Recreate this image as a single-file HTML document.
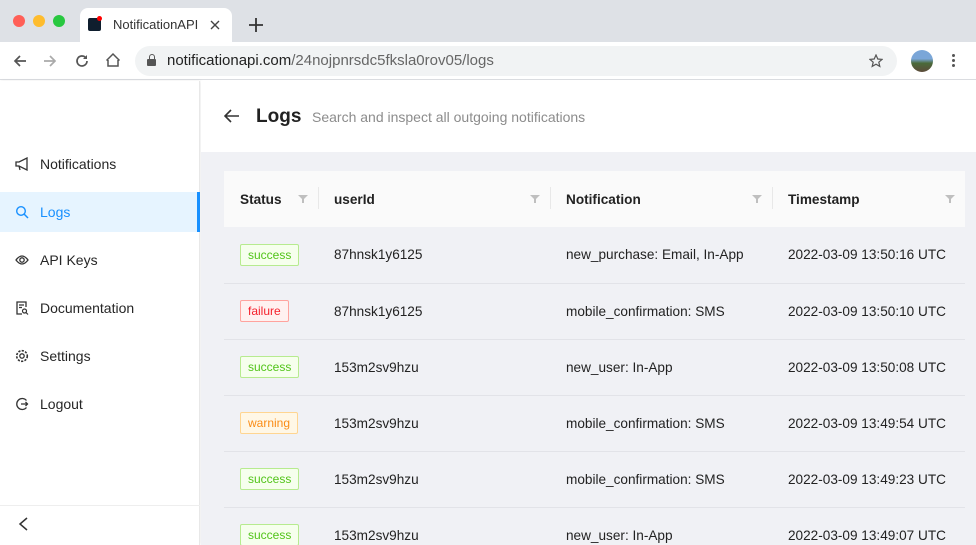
<!DOCTYPE html>
<html style="overflow:hidden"><head><style>
*{box-sizing:border-box;margin:0;padding:0}
html,body{width:976px;height:545px;overflow:hidden}
body{font-family:"Liberation Sans",Arial,sans-serif;background:#fff;position:relative;color:#222}
.tabbar{position:absolute;left:0;top:0;width:976px;height:42px;background:#dee1e6}
.dot{position:absolute;top:15px;width:12px;height:12px;border-radius:50%}
.tab{position:absolute;left:80px;top:8px;width:152px;height:34px;background:#fff;border-radius:8px 8px 0 0}
.addr{position:absolute;left:0;top:42px;width:976px;height:38px;background:#fff;border-bottom:1px solid #dadce0}
.url{position:absolute;left:135px;top:4px;width:762px;height:30px;background:#f1f3f4;border-radius:15px}
.side{position:absolute;left:0;top:81px;width:200px;height:464px;background:#fff;border-right:1px solid #e8e8e8;box-shadow:1px 0 3px rgba(0,0,0,.08)}
.item{position:absolute;left:0;width:200px;height:40px;font-size:14px;color:#262626;line-height:40px;padding-left:40px}
.item svg{position:absolute;left:15px;top:13px}
.main{position:absolute;left:201px;top:81px;width:775px;height:464px;background:#f0f1f5;overflow:hidden}
.head{position:absolute;left:0;top:0;width:775px;height:71px;background:#fff}
table{position:absolute;left:23px;top:90px;width:741px;border-collapse:collapse;font-size:13.6px}
th{background:#fafafa;height:56px;text-align:left;font-weight:bold;font-size:13.6px;color:#222;padding-left:16px;position:relative}
td{height:56px;padding-left:16px;border-bottom:1px solid #e2e3e8;color:#222}
th .f{position:absolute;right:10px;top:24px;width:0;height:0;border-left:5px solid transparent;border-right:5px solid transparent;border-top:5px solid #bfbfbf}
th .f:after{content:"";position:absolute;left:-1px;top:-2px;width:2px;height:5px;background:#bfbfbf}
th .sep{position:absolute;left:0;top:16px;height:22px;width:1px;background:#e8e8e8}
.b{display:inline-block;font-size:12px;line-height:20px;padding:0 7px;border:1px solid;border-radius:2px}
.s{color:#52c41a;background:#f6ffed;border-color:#b7eb8f}
.fl{color:#f5222d;background:#fff1f0;border-color:#ffa39e}
.w{color:#fa8c16;background:#fff7e6;border-color:#ffd591}
</style></head><body>
<div class="tabbar">
<div class="dot" style="left:13px;background:#ff5f57"></div>
<div class="dot" style="left:33px;background:#febc2e"></div>
<div class="dot" style="left:53px;background:#28c840"></div>
<div class="tab">
<div style="position:absolute;left:8px;top:10px;width:13px;height:13px;background:#0f1e2e;border-radius:2px"></div>
<div style="position:absolute;left:17px;top:8px;width:5px;height:5px;background:#f00;border-radius:50%"></div>
<div style="position:absolute;left:33px;top:9px;font-size:13px;color:#333">NotificationAPI</div>
<svg style="position:absolute;left:130px;top:12px" width="10" height="10" viewBox="0 0 10 10"><path d="M1 1l8 8M9 1l-8 8" stroke="#444" stroke-width="1.4"/></svg>
</div>
<svg style="position:absolute;left:249px;top:18px" width="14" height="14" viewBox="0 0 14 14"><path d="M7 0v14M0 7h14" stroke="#333" stroke-width="1.8"/></svg>
</div>
<div class="addr">
<svg style="position:absolute;left:12px;top:11px" width="16" height="16" viewBox="0 0 16 16"><path d="M14 8H3M8 3L3 8l5 5" stroke="#555" stroke-width="1.7" fill="none"/></svg>
<svg style="position:absolute;left:42px;top:11px" width="16" height="16" viewBox="0 0 16 16"><path d="M2 8h11M8 3l5 5-5 5" stroke="#aaa" stroke-width="1.7" fill="none"/></svg>
<svg style="position:absolute;left:74px;top:11px" width="16" height="16" viewBox="0 0 16 16"><path d="M13 8a5 5 0 1 1-1.5-3.6" stroke="#555" stroke-width="1.7" fill="none"/><path d="M13 2v4H9z" fill="#555"/></svg>
<svg style="position:absolute;left:105px;top:10px" width="16" height="16" viewBox="0 0 16 16"><path d="M3 8v6h10V8M1.5 8.5L8 2l6.5 6.5" stroke="#555" stroke-width="1.5" fill="none"/></svg>
<div class="url">
<div style="position:absolute;left:12px;top:13px;width:9px;height:7px;background:#555;border-radius:1px"></div>
<div style="position:absolute;left:13.5px;top:8px;width:6px;height:7px;border:1.5px solid #555;border-radius:3px 3px 0 0"></div>
<div style="position:absolute;left:32px;top:6px;font-size:15px;color:#222">notificationapi.com<span style="color:#666">/24nojpnrsdc5fksla0rov05/logs</span></div>
<svg style="position:absolute;left:734px;top:8px" width="14" height="14" viewBox="0 0 14 14"><path d="M7 1l1.8 4 4.2.4-3.2 2.8 1 4.2L7 10.2 3.2 12.4l1-4.2L1 5.4l4.2-.4z" stroke="#555" stroke-width="1.2" fill="none"/></svg>
</div>
<div style="position:absolute;left:911px;top:8px;width:22px;height:22px;border-radius:50%;background:linear-gradient(#7aa6d8 0,#7aa6d8 40%,#4a6a3a 60%,#5c4a3a)"></div>
<div style="position:absolute;left:952px;top:12px;width:3px;height:3px;background:#555;border-radius:50%;box-shadow:0 5px 0 #555,0 10px 0 #555"></div>
</div>
<div class="side">
<div class="item" style="top:63px"><svg width="14" height="14" viewBox="0 0 14 14"><path d="M1 5h3l8-4v12L4 9H1zM4 9l1 4" stroke="#333" stroke-width="1.3" fill="none"/></svg>Notifications</div>
<div class="item" style="top:111px;background:#e6f4ff;color:#1890ff;border-right:3px solid #1890ff"><svg width="14" height="14" viewBox="0 0 14 14"><circle cx="6" cy="6" r="4.3" stroke="#1890ff" stroke-width="1.4" fill="none"/><path d="M9 9l4 4" stroke="#1890ff" stroke-width="1.5"/></svg>Logs</div>
<div class="item" style="top:159px"><svg width="14" height="14" viewBox="0 0 14 14"><path d="M1 7q6-8 12 0q-6 8-12 0z" stroke="#333" stroke-width="1.3" fill="none"/><circle cx="7" cy="7" r="2.2" stroke="#333" stroke-width="1.3" fill="none"/></svg>API Keys</div>
<div class="item" style="top:207px"><svg width="14" height="14" viewBox="0 0 14 14"><path d="M7 13H2V1h9v5M4 4h5M4 6.5h3" stroke="#333" stroke-width="1.3" fill="none"/><circle cx="9.5" cy="10" r="2" stroke="#333" stroke-width="1.2" fill="none"/><path d="M11 11.5l2 2" stroke="#333" stroke-width="1.2"/></svg>Documentation</div>
<div class="item" style="top:255px"><svg width="14" height="14" viewBox="0 0 14 14"><circle cx="7" cy="7" r="2.2" stroke="#333" stroke-width="1.3" fill="none"/><circle cx="7" cy="7" r="5.3" stroke="#333" stroke-width="1.6" fill="none" stroke-dasharray="2.2 1.3"/></svg>Settings</div>
<div class="item" style="top:303px"><svg width="14" height="14" viewBox="0 0 14 14"><path d="M11.5 3.5A5.5 5.5 0 1 0 11.5 10.5M6 7h7M10.5 5l2 2-2 2" stroke="#333" stroke-width="1.3" fill="none"/></svg>Logout</div>
<div style="position:absolute;left:0;top:424px;width:200px;height:1px;background:#eee"></div>
<svg style="position:absolute;left:17px;top:436px" width="12" height="14" viewBox="0 0 12 14"><path d="M10 1L3 7l7 6" stroke="#333" stroke-width="1.5" fill="none"/></svg>
</div>
<div class="main">
<div class="head">
<svg style="position:absolute;left:23px;top:28px" width="16" height="14" viewBox="0 0 16 14"><path d="M15 7H2M7 1L1 7l6 6" stroke="#333" stroke-width="1.6" fill="none"/></svg>
<div style="position:absolute;left:55px;top:25px;font-size:19px;font-weight:bold;color:#222">Logs</div>
<div style="position:absolute;left:111px;top:28px;font-size:14px;color:#8c8c8c">Search and inspect all outgoing notifications</div>
</div>
<table>
<tr><th style="width:94px">Status<span class="f"></span></th><th style="width:232px"><span class="sep"></span>userId<span class="f"></span></th><th style="width:222px"><span class="sep"></span>Notification<span class="f"></span></th><th><span class="sep"></span>Timestamp<span class="f"></span></th></tr>
<tr><td><span class="b s">success</span></td><td>87hnsk1y6125</td><td>new_purchase: Email, In-App</td><td>2022-03-09 13:50:16 UTC</td></tr>
<tr><td><span class="b fl">failure</span></td><td>87hnsk1y6125</td><td>mobile_confirmation: SMS</td><td>2022-03-09 13:50:10 UTC</td></tr>
<tr><td><span class="b s">success</span></td><td>153m2sv9hzu</td><td>new_user: In-App</td><td>2022-03-09 13:50:08 UTC</td></tr>
<tr><td><span class="b w">warning</span></td><td>153m2sv9hzu</td><td>mobile_confirmation: SMS</td><td>2022-03-09 13:49:54 UTC</td></tr>
<tr><td><span class="b s">success</span></td><td>153m2sv9hzu</td><td>mobile_confirmation: SMS</td><td>2022-03-09 13:49:23 UTC</td></tr>
<tr><td><span class="b s">success</span></td><td>153m2sv9hzu</td><td>new_user: In-App</td><td>2022-03-09 13:49:07 UTC</td></tr>
</table>
</div>
</body></html>
